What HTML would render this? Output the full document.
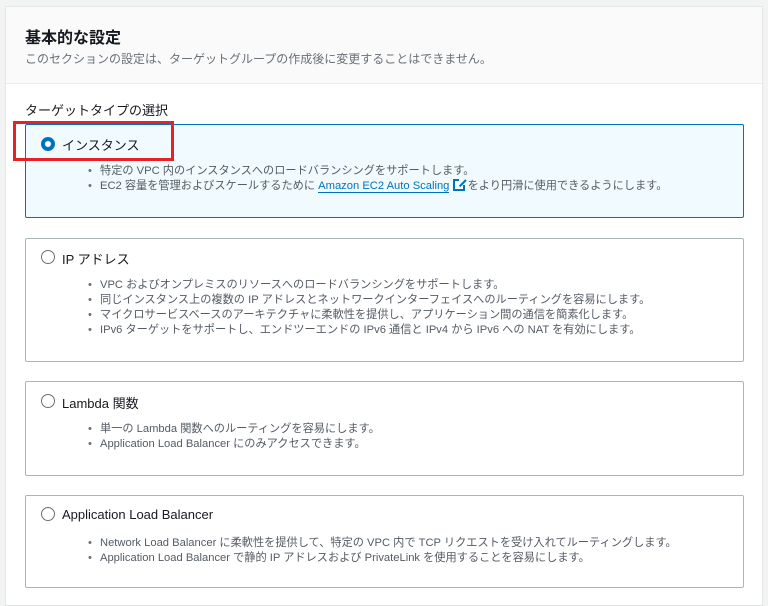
<!DOCTYPE html>
<html><head><meta charset="utf-8"><style>
*{margin:0;padding:0;box-sizing:border-box}
body{width:768px;height:598px;background:#f2f3f3;font-family:"Liberation Sans","Noto Sans CJK JP",sans-serif;position:relative;overflow:hidden;color:#16191f}
.card{position:absolute;left:5px;top:6px;width:758px;height:600px;background:#fff;border:1px solid #e4e6e6}
.hdr{position:absolute;left:0;top:0;width:100%;height:77px;background:#fafafa;border-bottom:1px solid #eaeded}
.abs{position:absolute;white-space:nowrap}
.box{position:absolute;left:25px;width:719px;border:1px solid #aab7b8;border-radius:2px;background:#fff}
.sel{background:#f1faff;border-color:#0073bb}
.radio{position:absolute;left:15px;width:14px;height:14px;border-radius:50%;border:1.5px solid #687078;background:#fff}
.radio.on{border:4px solid #0073bb}
.t{position:absolute;left:36px;font-size:13px;color:#16191f}
ul{position:absolute;left:74px;list-style:none;font-size:11.2px;color:#545b64;line-height:15px;white-space:nowrap}
li{position:relative}
li::before{content:"•";position:absolute;left:-12px;color:#687078}
a{color:#0073bb;text-decoration:none;border-bottom:1px solid #0073bb}
</style></head><body>
<div class="card"><div class="hdr"></div></div>
<div class="abs" style="left:25px;top:24px;font-size:16px;font-weight:bold">基本的な設定</div>
<div class="abs" style="left:25px;top:50px;font-size:12px;color:#687078">このセクションの設定は、ターゲットグループの作成後に変更することはできません。</div>
<div class="abs" style="left:25px;top:100px;font-size:13px">ターゲットタイプの選択</div>

<div class="box sel" style="top:124px;height:94px">
<div class="radio on" style="top:12px"></div>
<div class="t" style="top:10px">インスタンス</div>
<ul style="top:39px"><li>特定の VPC 内のインスタンスへのロードバランシングをサポートします。</li>
<li>EC2 容量を管理およびスケールするために <a>Amazon EC2 Auto Scaling</a> <span style="display:inline-block;width:12px;height:12px;border:2px solid #0073bb;vertical-align:-2px;position:relative"><span style="position:absolute;right:-3px;top:-3px;width:7px;height:7px;background:#f1faff"></span><span style="position:absolute;left:2px;top:-2px;width:9px;height:2px;background:#0073bb;transform:rotate(-45deg);transform-origin:right"></span></span> をより円滑に使用できるようにします。</li></ul>
</div>

<div class="box" style="top:238px;height:124px">
<div class="radio" style="top:11px"></div>
<div class="t" style="top:10px">IP アドレス</div>
<ul style="top:39px"><li>VPC およびオンプレミスのリソースへのロードバランシングをサポートします。</li>
<li>同じインスタンス上の複数の IP アドレスとネットワークインターフェイスへのルーティングを容易にします。</li>
<li>マイクロサービスベースのアーキテクチャに柔軟性を提供し、アプリケーション間の通信を簡素化します。</li>
<li>IPv6 ターゲットをサポートし、エンドツーエンドの IPv6 通信と IPv4 から IPv6 への NAT を有効にします。</li></ul>
</div>

<div class="box" style="top:381px;height:95px">
<div class="radio" style="top:12px"></div>
<div class="t" style="top:11px">Lambda 関数</div>
<ul style="top:40px"><li>単一の Lambda 関数へのルーティングを容易にします。</li>
<li>Application Load Balancer にのみアクセスできます。</li></ul>
</div>

<div class="box" style="top:495px;height:93px">
<div class="radio" style="top:11px"></div>
<div class="t" style="top:11px">Application Load Balancer</div>
<ul style="top:40px"><li>Network Load Balancer に柔軟性を提供して、特定の VPC 内で TCP リクエストを受け入れてルーティングします。</li>
<li>Application Load Balancer で静的 IP アドレスおよび PrivateLink を使用することを容易にします。</li></ul>
</div>

<div class="abs" style="left:13px;top:121px;width:161px;height:40px;border:3px solid #e8202a"></div>
</body></html>
